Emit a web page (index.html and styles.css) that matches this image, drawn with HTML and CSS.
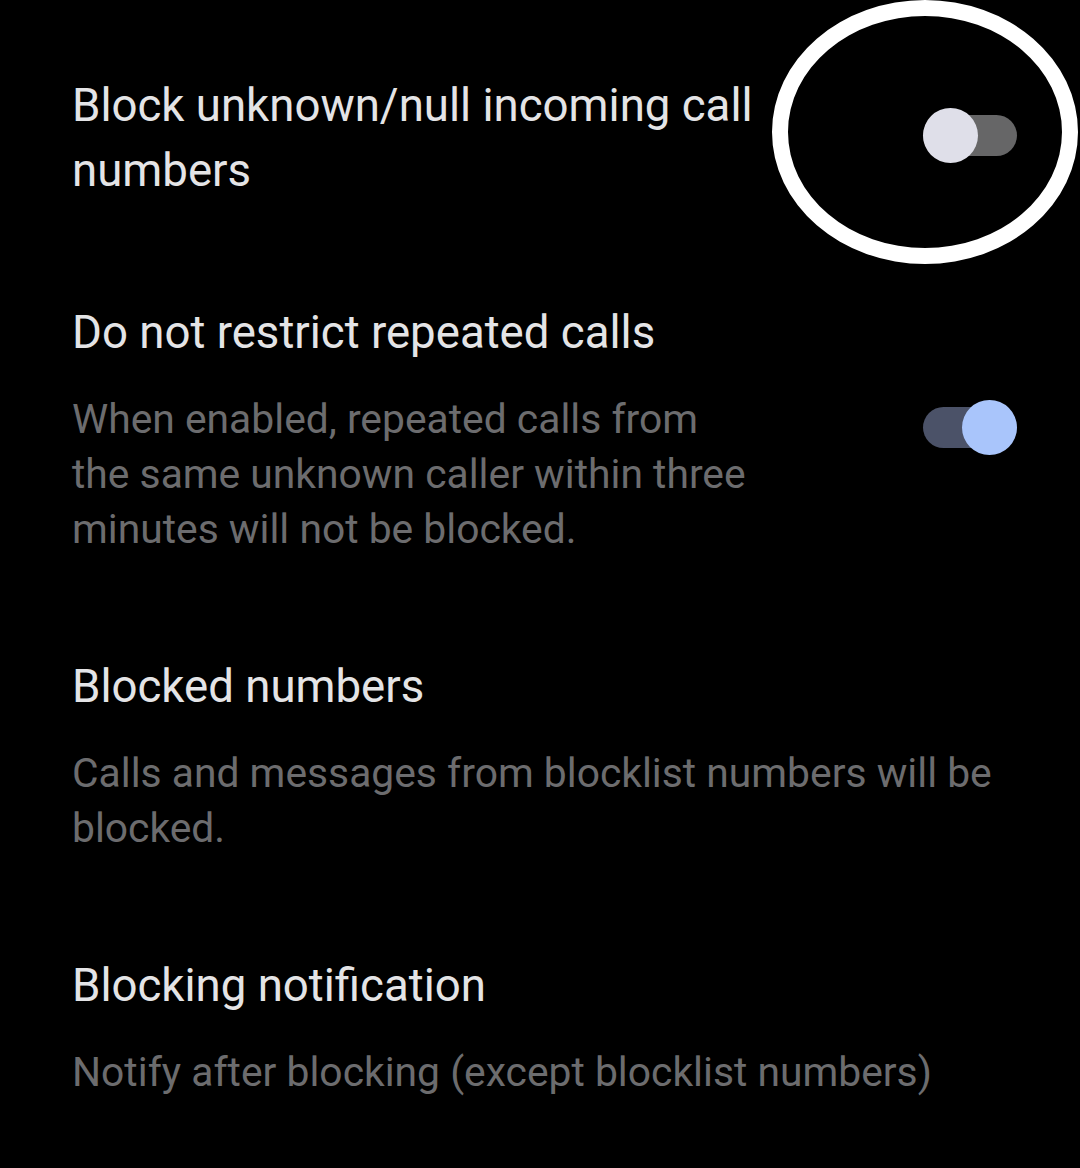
FILE: index.html
```html
<!DOCTYPE html>
<html lang="en">
<head>
    <meta charset="UTF-8">
    <meta name="viewport" content="width=device-width, initial-scale=1.0">
    <title>Call blocking settings</title>
    <link rel="stylesheet" href="styles.css">
</head>
<body>
    <div class="list">
        <div class="item">
            <div class="text">
                <div class="title">Block unknown/null incoming call numbers</div>
            </div>
            <div class="switch off"><span class="knob"></span></div>
            <div class="mark"></div>
        </div>

        <div class="item">
            <div class="text">
                <div class="title">Do not restrict repeated calls</div>
                <div class="sub">When enabled, repeated calls from the same unknown caller within three minutes will not be blocked.</div>
            </div>
            <div class="switch on"><span class="knob"></span></div>
        </div>

        <div class="item">
            <div class="text wide">
                <div class="title">Blocked numbers</div>
                <div class="sub">Calls and messages from blocklist numbers will be blocked.</div>
            </div>
        </div>

        <div class="item">
            <div class="text wide">
                <div class="title">Blocking notification</div>
                <div class="sub">Notify after blocking (except blocklist numbers)</div>
            </div>
        </div>
    </div>
</body>
</html>
```

FILE: styles.css
```css
html, body {
    background: #000;
}

body {
    margin: 0;
    font-family: Roboto, "Liberation Sans", sans-serif;
    width: 1080px;
    height: 1168px;
    overflow: hidden;
}

.list {
    padding: 73px 63px 0 72px;
    display: flex;
    flex-direction: column;
    gap: 97px;
}

.item {
    position: relative;
    display: flex;
    align-items: center;
    justify-content: space-between;
}

.text {
    width: 686px;
}

.text.wide {
    width: 945px;
}

.title {
    color: #e4e4e6;
    font-size: 45.6px;
    line-height: 65px;
}

.sub {
    margin-top: 27px;
    color: #6c6c6e;
    font-size: 40.8px;
    line-height: 55px;
}

.switch {
    position: relative;
    width: 94px;
    height: 41px;
    border-radius: 21px;
    flex: none;
}

.switch .knob {
    position: absolute;
    top: -7px;
    width: 55px;
    height: 55px;
    border-radius: 50%;
}

.switch.off {
    background: #666667;
    margin-top: -5px;
}

.switch.off .knob {
    left: 0;
    background: #dfdfe9;
}

.switch.on {
    background: #4b5268;
    margin-top: -3px;
}

.switch.on .knob {
    right: 0;
    background: #a9c5fb;
}

/* hand-drawn circle around the first switch */
.mark {
    position: absolute;
    right: -61px;
    top: -73px;
    width: 274px;
    height: 232px;
    border: 16px solid #fff;
    border-radius: 50%;
}
```
